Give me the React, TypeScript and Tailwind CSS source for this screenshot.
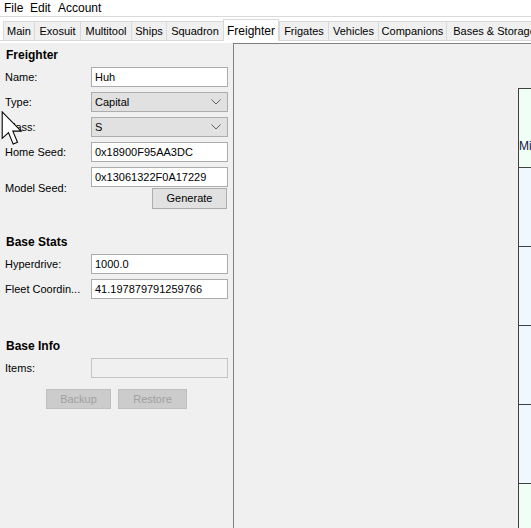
import React from 'react';

const tabs = [
  { label: 'Main', w: 'w-[31px]' },
  { label: 'Exosuit', w: 'w-[46px]' },
  { label: 'Multitool', w: 'w-[51px]' },
  { label: 'Ships', w: 'w-[35px]' },
  { label: 'Squadron', w: 'w-[57px]' },
  { label: 'Freighter', w: 'w-[56px]', active: true },
  { label: 'Frigates', w: 'w-[49px]' },
  { label: 'Vehicles', w: 'w-[50px]' },
  { label: 'Companions', w: 'w-[68px]' },
  { label: 'Bases & Storage', w: 'w-[96px]' },
];

function Chevron() {
  return (
    <svg width="10" height="6" viewBox="0 0 10 6" className="shrink-0">
      <polyline points="0.5,0.5 5,5 9.5,0.5" fill="none" stroke="#606060" strokeWidth="1" />
    </svg>
  );
}

function TextBox({ value, disabled }: { value?: string; disabled?: boolean }) {
  return (
    <div
      className={`w-[137px] h-[20px] border px-[3px] leading-[18px] whitespace-nowrap overflow-hidden ${
        disabled ? 'bg-[#f0f0f0] border-[#c4c4c4]' : 'bg-white border-[#acacac]'
      }`}
    >
      {value}
    </div>
  );
}

function Combo({ value }: { value: string }) {
  return (
    <div className="w-[137px] h-[20px] border border-[#adadad] bg-[#e1e1e1] pl-[3px] pr-[6px] flex items-center justify-between">
      <span className="leading-[18px]">{value}</span>
      <Chevron />
    </div>
  );
}

function Row({ label, children }: { label: string; children: React.ReactNode }) {
  return (
    <div className="flex items-center h-[20px]">
      <div className="w-[86px] shrink-0 whitespace-nowrap">{label}</div>
      {children}
    </div>
  );
}

function Cursor() {
  return (
    <svg
      width="24"
      height="36"
      viewBox="0 0 13 20"
      className="absolute left-[1px] top-[111px]"
    >
      <polygon
        points="0.5,0.5 0.5,15.2 4,12 6.6,18.4 9,17.4 6.4,11.2 11,11.2"
        fill="white"
        stroke="black"
        strokeWidth="0.6"
        strokeLinejoin="miter"
      />
    </svg>
  );
}

export default function App() {
  const rows = ['#f0fff6', '#f0f8ff', '#f0f8ff', '#f0f8ff', '#f0f8ff', '#f0fff6'];

  return (
    <div
      className="relative w-[531px] h-[528px] overflow-hidden flex flex-col bg-white text-black text-[11px]"
      style={{ fontFamily: '"Liberation Sans", Arial, sans-serif' }}
    >
      {/* menu bar */}
      <div className="h-[16px] flex items-center pl-[4px] text-[12px] shrink-0">
        <span className="w-[26px]">File</span>
        <span className="w-[28px]">Edit</span>
        <span>Account</span>
      </div>
      <div className="h-px bg-[#dadada] shrink-0" />

      {/* tabs */}
      <div className="h-[24px] flex items-end pl-[3px] border-b border-[#d9d9d9] shrink-0 whitespace-nowrap">
        {tabs.map((t) =>
          t.active ? (
            <div
              key={t.label}
              className={`${t.w} shrink-0 h-[22px] -mb-px relative bg-white border-x border-t border-[#d9d9d9] flex items-center justify-center text-[12px]`}
            >
              {t.label}
            </div>
          ) : (
            <div
              key={t.label}
              className={`${t.w} shrink-0 h-[19px] bg-[#f0f0f0] border-l border-t border-[#d9d9d9] flex items-center justify-center`}
            >
              {t.label}
            </div>
          )
        )}
      </div>
      <div className="h-[2px] shrink-0" />

      {/* content */}
      <div className="flex-1 flex min-h-0">
        {/* left panel */}
        <div className="w-[233px] shrink-0 bg-[#f0f0f0] pl-[5px] pt-[2px]">
          <div className="h-[20px] leading-[20px] font-bold text-[12px] pl-px">Freighter</div>
          <div className="mt-[2px] flex flex-col gap-[5px]">
            <Row label="Name:">
              <TextBox value="Huh" />
            </Row>
            <Row label="Type:">
              <Combo value="Capital" />
            </Row>
            <Row label="Class:">
              <Combo value="S" />
            </Row>
            <Row label="Home Seed:">
              <TextBox value="0x18900F95AA3DC" />
            </Row>
            <div className="flex">
              <div className="w-[86px] shrink-0 flex items-center">Model Seed:</div>
              <div className="flex flex-col items-end w-[137px]">
                <TextBox value="0x13061322F0A17229" />
                <button className="mt-px mr-px w-[75px] h-[21px] border border-[#adadad] bg-[#e1e1e1] text-[11px]">
                  Generate
                </button>
              </div>
            </div>
          </div>

          <div className="mt-[23px] h-[20px] leading-[20px] font-bold text-[12px] pl-px">Base Stats</div>
          <div className="mt-[2px] flex flex-col gap-[5px]">
            <Row label="Hyperdrive:">
              <TextBox value="1000.0" />
            </Row>
            <Row label="Fleet Coordin...">
              <TextBox value="41.197879791259766" />
            </Row>
          </div>

          <div className="mt-[37px] h-[20px] leading-[20px] font-bold text-[12px] pl-px">Base Info</div>
          <div className="mt-[2px]">
            <Row label="Items:">
              <TextBox disabled />
            </Row>
          </div>
          <div className="mt-[11px] flex gap-[7px] pl-[41px]">
            <button className="w-[65px] h-[20px] border border-[#bfbfbf] bg-[#cccccc] text-[#a0a0a0] text-[11px]">
              Backup
            </button>
            <button className="w-[69px] h-[20px] border border-[#bfbfbf] bg-[#cccccc] text-[#a0a0a0] text-[11px]">
              Restore
            </button>
          </div>
        </div>

        {/* right panel */}
        <div className="flex-1 min-w-0 bg-[#f0f0f0] border-l border-t border-[#808080] overflow-hidden pl-[284px] pt-[44px]">
          <div className="w-[100px] border-l border-t border-[#404040]">
            {rows.map((c, i) => (
              <div
                key={i}
                className="h-[79px] border-b border-[#404040]"
                style={{ backgroundColor: c }}
              >
                {i === 0 && (
                  <div className="pt-[50px] leading-[14px] text-[12px] text-[#141450]">Mir</div>
                )}
              </div>
            ))}
          </div>
        </div>
      </div>

      <Cursor />
    </div>
  );
}
